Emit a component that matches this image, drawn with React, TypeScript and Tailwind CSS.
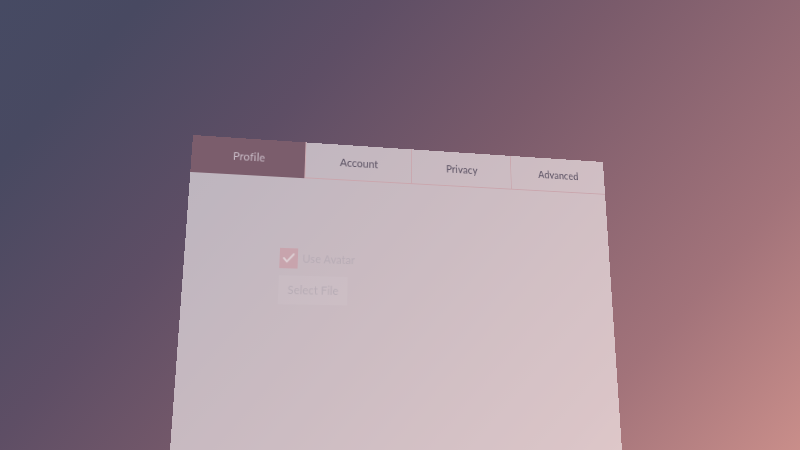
import React from "react";
import { Check } from "lucide-react";

const tabs = ["Profile", "Account", "Privacy", "Advanced"];

export default function App() {
  return (
    <div className="w-[800px] h-[450px] overflow-hidden pl-[193px] pt-[135px] bg-[linear-gradient(131deg,#464a63_0%,#484961_12%,#5e4e65_32%,#7a5b6b_52%,#a2737a_80%,#c98e8a_100%)] font-['Lato',sans-serif]">
      {/* panel is tilted back, right side further away */}
      <div className="w-[500px] h-[500px] bg-[#fffafa]/60 origin-top-left [transform:matrix3d(0.9309,0.0612,0,0.0002708,-0.0701,0.9607,0,-0.000327,0,0,1,0,0,0,0,1)]">
        <div className="grid grid-cols-4 h-[38px] border-b border-[#c9a6ad]">
          {tabs.map((tab, i) => (
            <div
              key={tab}
              className={
                i === 0
                  ? "flex items-center justify-center text-[12px] tracking-[0.2px] bg-[#7b5d6c] text-[#c9bcc7] h-[38px]"
                  : "flex items-center justify-center text-[12px] tracking-[0.2px] text-[#564d5f] border-l border-[#c9a6ad]"
              }
            >
              {tab}
            </div>
          ))}
        </div>
        <div className="pl-[101px] pt-[72px] flex flex-col items-start gap-[7px]">
          <div className="flex items-center gap-[5px]">
            <div className="w-[20px] h-[20px] bg-[#c8a4ad] flex items-center justify-center">
              <Check className="w-[16px] h-[16px] text-[#ddd0d4]" strokeWidth={3} />
            </div>
            <span className="text-[12px] tracking-[0.2px] text-[#b7acb5]">Use Avatar</span>
          </div>
          <div className="px-[10px] py-[5px] text-[12px] tracking-[0.2px] text-[#b7acb5] bg-white/5">Select File</div>
        </div>
      </div>
    </div>
  );
}
